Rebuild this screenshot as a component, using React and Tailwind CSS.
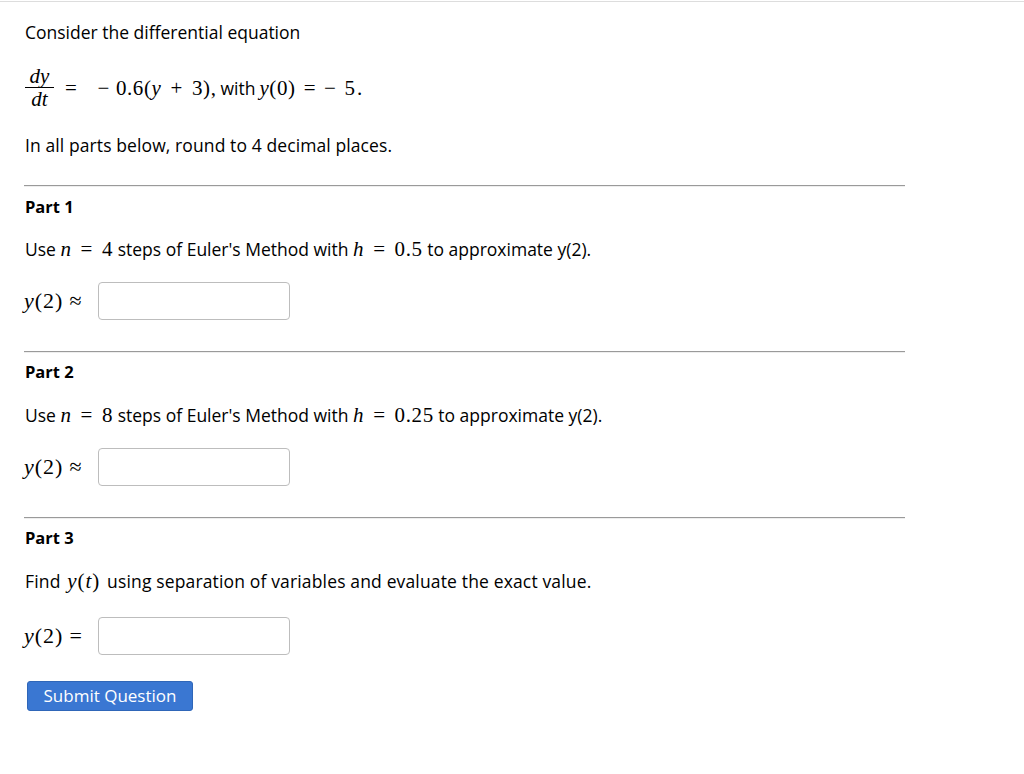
import React from "react";

function M({ children, className = "" }) {
  return (
    <span className={"font-['Liberation_Serif',serif] text-[21px] leading-[16px] tracking-[0.6px] " + className}>
      {children}
    </span>
  );
}
function I({ children }) {
  return <span className="italic">{children}</span>;
}
function Eq({ className = "mx-[9px]" }) {
  return <span className={className}>=</span>;
}

function Hr() {
  return <div className="-ml-px w-[881px] border-t border-b border-t-[#9a9a9a] border-b-[#eeeeee]" />;
}

function AnswerRow({ label, className }) {
  return (
    <div className={"flex h-[38px] items-center " + className}>
      <M className="w-[74px] shrink-0 -ml-px text-[22px] tracking-[1px]">
        <I>y</I>(2)<span className="ml-[6px]">{label}</span>
      </M>
      <input
        type="text"
        className="h-[38px] w-[192px] rounded-[4px] border border-[#bdbdbd] bg-white"
      />
    </div>
  );
}

export default function App() {
  return (
    <div className="min-h-[774px] w-[1024px] bg-white text-black font-['Open_Sans',sans-serif]">
      <div className="mt-px border-t border-[#dddddd]" />
      <div className="pl-[25px] text-[17.5px] leading-[24px]">
        <p className="mt-[18px] h-[24px]">Consider the differential equation</p>

        <div className="mt-[21px] flex h-[45px] items-center">
          <div className="flex flex-col items-center font-['Liberation_Serif',serif] text-[21px] italic">
            <span className="px-[2px] leading-[22px]">dy</span>
            <span className="h-px w-[29px] bg-black" />
            <span className="px-[2px] leading-[22px]">dt</span>
          </div>
          <M className="ml-[11px]">
            =<span className="ml-[20px] mr-[6px]">−</span>0.6(<I>y</I><span className="mx-[9px]">+</span>3),
          </M>
          <span className="ml-[4px]">with</span>
          <M className="ml-[4px]">
            <I>y</I>(0)<Eq className="mx-[8px]" />−<span className="ml-[8px] tracking-[2px]">5.</span>
          </M>
        </div>

        <p className="mt-[23px] h-[24px] tracking-[0.1px]">In all parts below, round to 4 decimal places.</p>

        <div className="mt-[28px]">
          <Hr />
        </div>

        <p className="mt-[8px] h-[24px] text-[16.5px] font-bold">Part 1</p>
        <p className="mt-[18px] h-[24px]">
          Use <M><I>n</I><Eq />4</M> steps of Euler's Method with <M><I>h</I><Eq />0.5</M> to approximate y(2).
        </p>
        <AnswerRow label="≈" className="mt-[21px]" />

        <div className="mt-[31px]">
          <Hr />
        </div>

        <p className="mt-[7px] h-[24px] text-[16.5px] font-bold">Part 2</p>
        <p className="mt-[19px] h-[24px]">
          Use <M><I>n</I><Eq />8</M> steps of Euler's Method with <M><I>h</I><Eq />0.25</M> to approximate y(2).
        </p>
        <AnswerRow label="≈" className="mt-[21px]" />

        <div className="mt-[31px]">
          <Hr />
        </div>

        <p className="mt-[7px] h-[24px] text-[16.5px] font-bold">Part 3</p>
        <p className="mt-[19px] h-[24px] tracking-[0.15px]">
          Find <M className="mx-[2px] tracking-[1px]"><I>y</I>(<I>t</I>)</M> using separation of variables and evaluate the exact value.
        </p>
        <AnswerRow label="=" className="mt-[24px]" />

        <button
          type="button"
          className="mt-[26px] ml-[2px] h-[30px] w-[166px] rounded-[3px] border border-[#2f66b8] bg-[#3a77d2] text-[17px] leading-[20px] text-white"
        >
          Submit Question
        </button>
      </div>
    </div>
  );
}
